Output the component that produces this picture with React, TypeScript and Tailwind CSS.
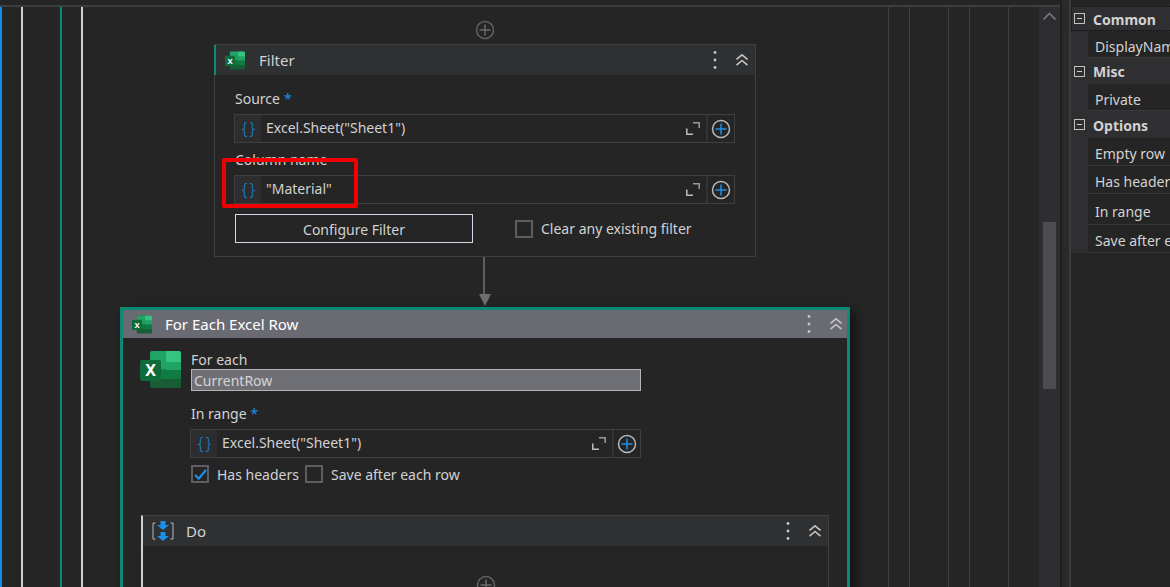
import type { ReactNode } from "react";

function ExcelIcon({ big = false }: { big?: boolean }) {
  return (
    <svg viewBox="0 0 41 37" className={big ? "w-[41px] h-[37px] shrink-0" : "w-[20px] h-[19px] shrink-0"}>
      <rect x="10" y="0" width="31" height="37" rx="2" fill="#185c37" />
      <path d="M12 0h14v18.500H10V2a2 2 0 0 1 2-2z" fill="#21a366" />
      <path d="M26 0h13a2 2 0 0 1 2 2v9H26z" fill="#33c481" />
      <rect x="26" y="11" width="15" height="8" fill="#21a366" />
      <rect x="26" y="19" width="15" height="9" fill="#107c41" />
      <rect x="10" y="19" width="16" height="9" fill="#107c41" />
      <rect x="0" y="9" width="21" height="21" rx="2" fill="#0f6b3a" />
      <text x="10.500" y="25" textAnchor="middle" fontSize="16" fontWeight="700" fill="#fff" fontFamily="Noto Sans, sans-serif">
        X
      </text>
    </svg>
  );
}

function RoundPlus({ gray = false }: { gray?: boolean }) {
  const line = gray ? "#6b6b6e" : "#1c8fe6";
  return (
    <svg viewBox="0 0 20 20" className="w-[20px] h-[20px] shrink-0" fill="none">
      <circle cx="10" cy="10" r="8.500" stroke={gray ? "#636366" : "#b9b9b9"} strokeWidth="1.500" />
      <path d="M10 4.500v11M4.500 10h11" stroke={line} strokeWidth="1.500" />
    </svg>
  );
}

function Kebab() {
  return (
    <svg viewBox="0 0 4 18" className="w-[4px] h-[18px] shrink-0" fill="#c8c8c8">
      <circle cx="2" cy="1.500" r="1.400" />
      <circle cx="2" cy="9" r="1.400" />
      <circle cx="2" cy="16.500" r="1.400" />
    </svg>
  );
}

function DoubleUp() {
  return (
    <svg viewBox="0 0 12 12" className="w-[12px] h-[12px] shrink-0" fill="none" stroke="#c4c4c4" strokeWidth="1.600">
      <path d="M0.500 5.500 6 0.800l5.500 4.700M0.500 11.200 6 6.500l5.500 4.700" />
    </svg>
  );
}

function Expand() {
  return (
    <svg viewBox="0 0 14 13" className="w-[14px] h-[13px] shrink-0" fill="none" strokeWidth="1.500">
      <path d="M7 0.800h6.200V6" stroke="#9a9a9a" />
      <path d="M0.800 6.500v5.700H7" stroke="#bdbdbd" />
    </svg>
  );
}

function DoIcon() {
  return (
    <svg viewBox="0 0 22 20" className="w-[22px] h-[20px] shrink-0" fill="none">
      <path d="M3.500 2H1v16h2.500M18.500 2H21v16h-2.500" stroke="#b8b8b8" strokeWidth="1" />
      <path d="M8.500 0h5v4H17l-6 5-6-5h3.500z" fill="#1c8fe6" />
      <path d="M8.500 11h5v4H17l-6 5-6-5h3.500z" fill="#1c8fe6" />
    </svg>
  );
}

function Checkbox({ checked = false }: { checked?: boolean }) {
  return (
    <span className="w-[18px] h-[18px] border-2 border-[#5e5e62] shrink-0 flex items-center justify-center">
      {checked && (
        <svg viewBox="0 0 14 12" className="w-[13px] h-[11px]" fill="none" stroke="#1c8fe6" strokeWidth="2.400">
          <path d="M1 6.500 5 10.500 13 1" />
        </svg>
      )}
    </span>
  );
}

function Label({ text, required = false, className = "" }: { text: string; required?: boolean; className?: string }) {
  return (
    <div className={`h-[18px] pb-[2px] flex items-center gap-1 text-[14px] text-[#d2d2d2] ${className}`}>
      {text}
      {required && <span className="text-[#1c8fe6]">*</span>}
    </div>
  );
}

function ExprInput({ value, className }: { value: string; className: string }) {
  return (
    <div className={`h-[29px] flex border border-[#3f3f42] ${className}`}>
      <div className="w-[26px] pb-[2px] bg-[#2d2d30] text-[#1a84d6] text-[16px] font-light tracking-[-1px] flex items-center justify-center shrink-0">{"{ }"}</div>
      <div className="flex-1 pl-[5px] pb-[2px] flex items-center text-[14px] text-[#d2d2d2]">{value}</div>
      <div className="flex items-center pr-[6px]">
        <Expand />
      </div>
      <div className="w-[28px] border-l-2 border-[#333336] flex items-center justify-center shrink-0">
        <RoundPlus />
      </div>
    </div>
  );
}

function CardHeader({ icon, title, className, actions = "pr-[7px]" }: { icon: ReactNode; title: string; className: string; actions?: string }) {
  return (
    <div className={`flex items-center text-[15px] ${className}`}>
      {icon}
      <span>{title}</span>
      <div className={`ml-auto flex items-center gap-[19px] ${actions}`}>
        <Kebab />
        <DoubleUp />
      </div>
    </div>
  );
}

const propRows = [
  { group: "Common", rows: [["DisplayName", "h-[27px]"]], height: "h-[25px]", dotted: true },
  { group: "Misc", rows: [["Private", "h-[27px]"]], height: "h-[26px]", dotted: false },
  {
    group: "Options",
    rows: [
      ["Empty row", "h-[28px]"],
      ["Has headers", "h-[28px]"],
      ["In range", "h-[31px]"],
      ["Save after each row", "h-[28px]"],
    ],
    height: "h-[27px]",
    dotted: false,
  },
];

function PropertyPanel() {
  return (
    <div className="flex-1 min-w-0 pt-[6px] overflow-hidden">
      <div className="bg-[#2f2f32]">
        {propRows.map((g) => (
          <div key={g.group}>
            <div className={`flex items-center gap-[8px] ${g.height} ${g.dotted ? "pl-[2px] border-y border-l border-dotted border-[#0d0d0d]" : "pl-[3px]"}`}>
              <span className="w-[11px] h-[11px] border border-[#c0c0c0] flex items-center justify-center shrink-0">
                <span className="w-[5px] h-px bg-[#d0d0d0]" />
              </span>
              <span className={`text-[14px] font-bold text-[#d2d2d2] ${g.group === "Misc" ? "" : "pt-[2px]"}`}>{g.group}</span>
            </div>
            {g.rows.map(([name, h]) => (
              <div key={name} className={`ml-[17px] pl-[7px] pt-[4px] bg-[#252526] border-b border-[#38383b] flex items-center text-[14px] text-[#d2d2d2] whitespace-nowrap ${h}`}>
                {name}
              </div>
            ))}
          </div>
        ))}
      </div>
    </div>
  );
}

export default function App() {
  return (
    <div className="w-[1170px] h-[587px] overflow-hidden flex bg-[#252526] font-['Noto_Sans',sans-serif]">
      <div className="w-[1062px] h-full flex flex-col shrink-0 border-r-2 border-[#1f1f20]">
        <div className="h-[7px] border-b-2 border-[#3e3e40] shrink-0" />
        <div className="flex flex-1 min-h-0">
          {/* nested sequence frames */}
          <div className="w-[1039px] shrink-0 overflow-hidden">
            <div className="w-[1009px] h-full border-l-2 border-r border-l-[#0e8fe8] border-r-[#3f3f42] pl-[19px] pr-[38px]">
              <div className="h-full border-l-2 border-r border-l-[#d0d0d0] border-r-[#3f3f42] pl-[37px] pr-[20px]">
                <div className="h-full border-l-2 border-r border-l-[#0b8a74] border-r-[#3f3f42] pl-[19px] pr-[38px]">
                  <div className="h-full border-l-2 border-r border-l-[#d0d0d0] border-r-[#3f3f42] pr-[20px]">
                    <div className="h-full border-r border-[#3f3f42] pr-[1px] flex flex-col items-center pt-[13px]">
                      <RoundPlus gray />

                      <div className="relative w-[542px] mt-[4px] border border-[#3f3f42] shrink-0">
                        <CardHeader
                          icon={<span className="ml-[9px] mr-[14px]"><ExcelIcon /></span>}
                          title="Filter"
                          className="h-[30px] -ml-px border-l-2 border-[#0b8a74] bg-[#2f3032] text-[#d2d2d2]"
                        />
                        <div className="pl-[19px] pr-[20px] pt-[15px] pb-[13px]">
                          <Label text="Source" required className="ml-px" />
                          <ExprInput value={'Excel.Sheet("Sheet1")'} className="mt-[6px]" />
                          <div className="mt-[8px]">
                            <Label text="Column name" className="ml-px" />
                          </div>
                          <ExprInput value={'"Material"'} className="mt-[6px]" />
                          <div className="mt-[10px] flex items-center">
                            <button className="ml-px w-[238px] h-[29px] pt-[1px] border border-[#d4dbe8] text-[14px] text-[#d2d2d2]">Configure Filter</button>
                            <div className="ml-[42px] flex items-center gap-[8px] text-[14px] text-[#d2d2d2]">
                              <Checkbox />
                              Clear any existing filter
                            </div>
                          </div>
                        </div>
                        {/* red annotation over the column name field */}
                        <div className="absolute left-[7px] top-[113px] w-[136px] h-[50px] border-[4px] border-[#f00000] rounded-[2px]" />
                      </div>

                      <div className="w-[2px] h-[37px] mr-[2px] bg-[#5e5e60] shrink-0" />
                      <svg viewBox="0 0 12 12" className="w-[12px] h-[12px] shrink-0" fill="#6f6f72">
                        <path d="M0 0h12L6 12z" />
                      </svg>

                      <div className="w-[730px] mt-[1px] border-[3px] border-[#0b8a74] shrink-0 shadow-[6px_4px_10px_rgba(0,0,0,0.45)]">
                        <CardHeader
                          icon={<span className="ml-[9px] mr-[13px]"><ExcelIcon /></span>}
                          title="For Each Excel Row"
                          className="h-[28px] bg-[#6a6b72] text-white"
                          actions="pr-[5px]"
                        />
                        <div className="flex pl-[17px] pt-[13px]">
                          <div className="pr-[10px]">
                            <ExcelIcon big />
                          </div>
                          <div className="w-[450px]">
                            <Label text="For each" />
                            <div className="h-[22px] bg-[#6f7076] border border-[#b5b5b5] pl-[2px] flex items-center text-[14px] text-[#d4d4d4]">CurrentRow</div>
                            <div className="mt-[14px]">
                              <Label text="In range" required />
                            </div>
                            <ExprInput value={'Excel.Sheet("Sheet1")'} className="mt-[6px] -ml-px" />
                            <div className="mt-[7px] h-[18px] flex items-center text-[14px] text-[#d2d2d2]">
                              <Checkbox checked />
                              <span className="ml-[8px]">Has headers</span>
                              <span className="ml-[6px]"><Checkbox /></span>
                              <span className="ml-[8px]">Save after each row</span>
                            </div>
                          </div>
                        </div>

                        <div className="ml-[18px] w-[688px] mt-[32px] border-t border-r border-[#3f3f42] border-l-2 border-l-[#d0d0d0]">
                          <CardHeader
                            icon={<span className="ml-[9px] mr-[12px]"><DoIcon /></span>}
                            title="Do"
                            className="h-[30px] bg-[#2f3032] text-[#d2d2d2]"
                          />
                          <div className="h-[80px] flex justify-center pt-[29px]">
                            <RoundPlus gray />
                          </div>
                        </div>
                      </div>
                    </div>
                  </div>
                </div>
              </div>
            </div>
          </div>

          <div className="flex-1 bg-[#2e2e31] pl-[4px] pt-[5px]">
            <svg viewBox="0 0 13 8" className="w-[13px] h-[8px]" fill="none" stroke="#77777a" strokeWidth="1.600">
              <path d="M0.500 7.500 6.500 1.500l6 6" />
            </svg>
            <div className="w-[13px] h-[167px] mt-[202px] bg-[#4c4c52]" />
          </div>
        </div>
      </div>

      <div className="w-[7px] bg-[#2a2a2c] border-r-2 border-[#3b3b3e] shrink-0 box-content" />
      <PropertyPanel />
    </div>
  );
}
